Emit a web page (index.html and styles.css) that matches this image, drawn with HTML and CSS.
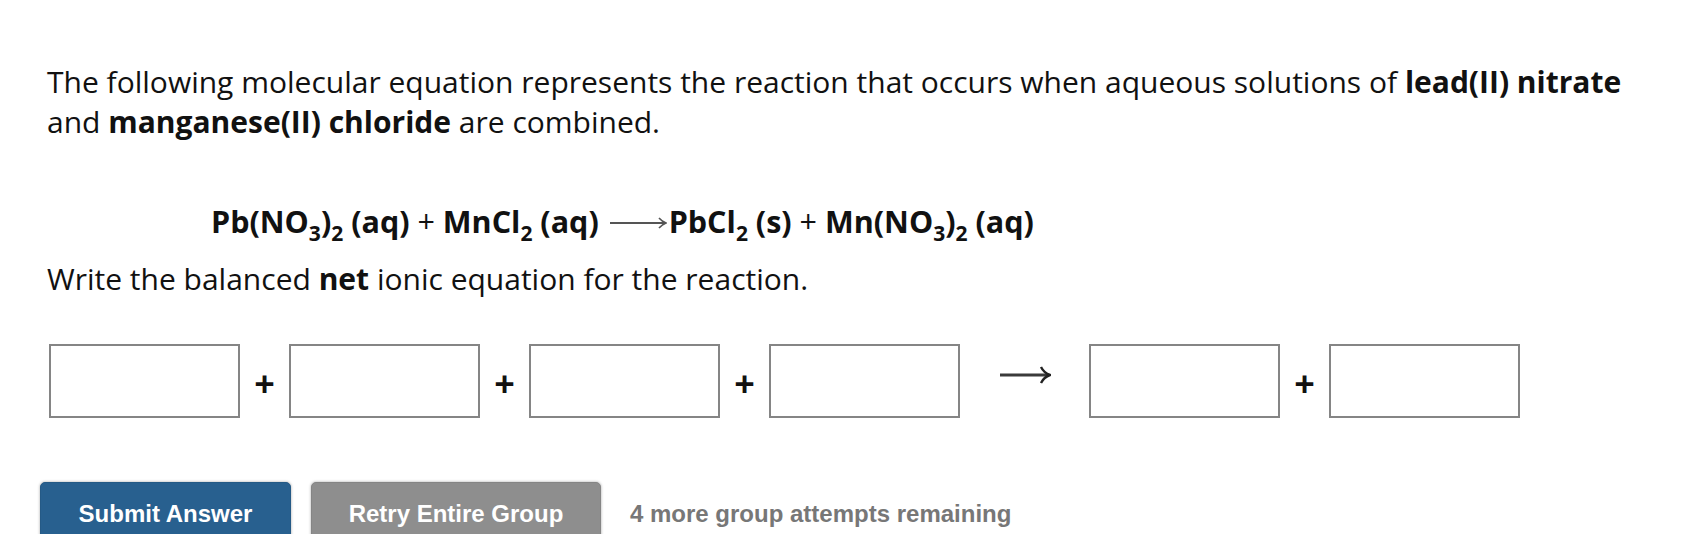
FILE: index.html
```html
<!DOCTYPE html>
<html lang="en">
<head>
    <meta charset="UTF-8">
    <meta name="viewport" content="width=device-width, initial-scale=1.0">
    <title>Net Ionic Equation</title>
    <link rel="stylesheet" href="styles.css">
</head>
<body>
    <div class="question">
        <p class="intro">The following molecular equation represents the reaction that occurs when aqueous solutions of <b>lead(II) nitrate</b> and <b>manganese(II) chloride</b> are combined.</p>
        <div class="equation">
            Pb(NO<sub>3</sub>)<sub>2</sub> (aq) <span class="op">+</span> MnCl<sub>2</sub> (aq) <svg class="yields" viewBox="0 0 58 16" xmlns="http://www.w3.org/2000/svg"><path d="M1 8 H56" stroke="#555" stroke-width="2" fill="none"/><path d="M50 3 Q53 6.5 57 8 Q53 9.5 50 13" stroke="#555" stroke-width="1.6" fill="none"/></svg>PbCl<sub>2</sub> (s) <span class="op">+</span> Mn(NO<sub>3</sub>)<sub>2</sub> (aq)
        </div>
        <p class="prompt">Write the balanced <b>net</b> ionic equation for the reaction.</p>
        <div class="answer-row">
            <input class="slot" type="text">
            <span class="plus">+</span>
            <input class="slot" type="text">
            <span class="plus">+</span>
            <input class="slot" type="text">
            <span class="plus">+</span>
            <input class="slot" type="text">
            <span class="arrow">
                <svg viewBox="0 0 52 20" xmlns="http://www.w3.org/2000/svg">
                    <path d="M1 10 H48" stroke="#3a3a3a" stroke-width="3" fill="none"/>
                    <path d="M42 2 Q45 8 51 10 Q45 12 42 18" stroke="#222" stroke-width="2.4" fill="none"/>
                </svg>
            </span>
            <input class="slot" type="text">
            <span class="plus">+</span>
            <input class="slot" type="text">
        </div>
        <div class="actions">
            <button class="btn btn-submit">Submit Answer</button>
            <button class="btn btn-retry">Retry Entire Group</button>
            <span class="attempts">4 more group attempts remaining</span>
        </div>
    </div>
</body>
</html>
```

FILE: styles.css
```css
body {
    margin: 0;
    padding: 0;
    background: #fff;
    color: #111;
    font-family: 'Open Sans', 'Noto Sans', sans-serif;
}
.question {
    padding: 62px 0 0 40px;
}
.intro {
    margin: 0;
    padding-left: 7px;
    font-size: 30px;
    line-height: 40px;
    max-width: 1630px;
}
.intro b,
.prompt b {
    font-weight: 700;
}
.equation {
    margin: 59px 0 0 0;
    padding-left: 171px;
    font-size: 30.5px;
    line-height: 40px;
    font-weight: 700;
    white-space: nowrap;
}
.equation sub {
    font-size: 21px;
    line-height: 0;
    vertical-align: -8px;
}
.equation .op {
    font-weight: 400;
}
.equation .yields {
    width: 58px;
    height: 16px;
    margin-left: 2px;
    margin-right: 2px;
    vertical-align: 2px;
}
.prompt {
    margin: 18px 0 0 0;
    padding-left: 7px;
    font-size: 30px;
    line-height: 40px;
}
.answer-row {
    display: flex;
    align-items: center;
    margin-top: 45px;
    padding-left: 9px;
}
.slot {
    box-sizing: border-box;
    width: 191px;
    height: 74px;
    margin: 0;
    border: 2px solid #858585;
    border-radius: 0;
    background: #fff;
    font-size: 24px;
    font-family: 'Open Sans', sans-serif;
    padding: 0 8px;
}
.plus {
    width: 49px;
    text-align: center;
    font-size: 36px;
    font-weight: 700;
    line-height: 1;
    padding-top: 6px;
}
.arrow {
    width: 129px;
    display: flex;
    justify-content: center;
    margin-top: -12px;
}
.arrow svg {
    width: 52px;
    height: 20px;
}
.actions {
    display: flex;
    align-items: center;
    margin-top: 64px;
}
.btn {
    height: 64px;
    border-radius: 5px;
    color: #fff;
    font-family: 'Liberation Sans', Arial, sans-serif;
    font-size: 24px;
    font-weight: 700;
    cursor: pointer;
    box-shadow: 0 0 3px rgba(0, 0, 0, 0.35);
}
.btn-submit {
    width: 251px;
    background: #28608f;
    border: 1px solid #255a86;
}
.btn-retry {
    width: 290px;
    margin-left: 20px;
    background: #8e8e8e;
    border: 1px solid #858585;
}
.attempts {
    margin-left: 29px;
    font-family: 'Liberation Sans', Arial, sans-serif;
    font-size: 24px;
    font-weight: 700;
    color: #777;
}
```
